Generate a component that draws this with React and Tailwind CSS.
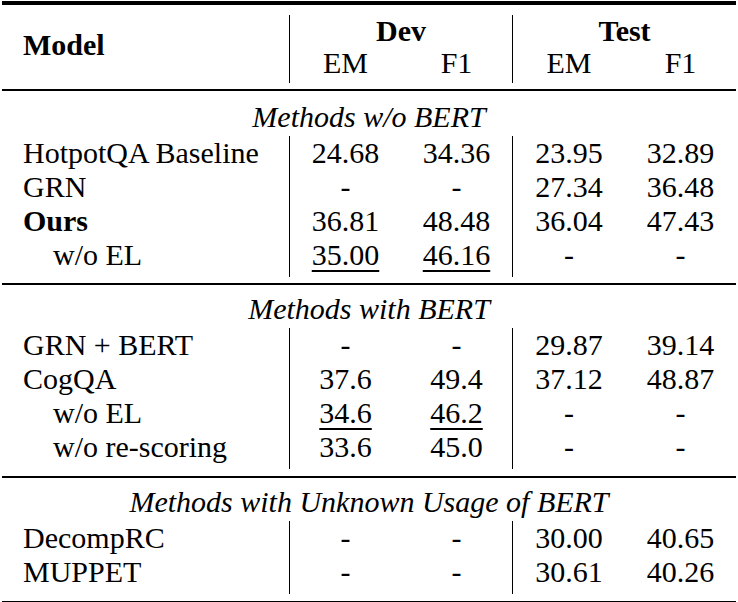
const sections = [
  {
    title: "Methods w/o BERT",
    pt: "pt-[9px]",
    pb: "pb-[6px]",
    rows: [
      { name: "HotpotQA Baseline", vals: ["24.68", "34.36", "23.95", "32.89"] },
      { name: "GRN", vals: ["-", "-", "27.34", "36.48"] },
      { name: "Ours", bold: true, vals: ["36.81", "48.48", "36.04", "47.43"] },
      { name: "w/o EL", indent: true, vals: ["35.00", "46.16", "-", "-"], ul: [true, true, false, false] },
    ],
  },
  {
    title: "Methods with BERT",
    pt: "pt-[7px]",
    pb: "pb-[7px]",
    rows: [
      { name: "GRN + BERT", vals: ["-", "-", "29.87", "39.14"] },
      { name: "CogQA", vals: ["37.6", "49.4", "37.12", "48.87"] },
      { name: "w/o EL", indent: true, vals: ["34.6", "46.2", "-", "-"], ul: [true, true, false, false] },
      { name: "w/o re-scoring", indent: true, vals: ["33.6", "45.0", "-", "-"] },
    ],
  },
  {
    title: "Methods with Unknown Usage of BERT",
    pt: "pt-[7px]",
    pb: "pb-[7px]",
    rows: [
      { name: "DecompRC", vals: ["-", "-", "30.00", "40.65"] },
      { name: "MUPPET", vals: ["-", "-", "30.61", "40.26"] },
    ],
  },
];

function Cell({ value, underline, width }) {
  return (
    <div className={`${width} text-center`}>
      <span className={underline ? "underline decoration-[1.5px] underline-offset-[5px]" : ""}>{value}</span>
    </div>
  );
}

function Row({ row }) {
  const ul = row.ul || [false, false, false, false];
  return (
    <div className="flex h-[34px] leading-[34px]">
      <div className={`w-[287px] ${row.indent ? "pl-[51px]" : "pl-[21px]"} ${row.bold ? "font-bold" : ""}`}>
        {row.name}
      </div>
      <div className="flex w-[223px] border-l border-black">
        <Cell value={row.vals[0]} underline={ul[0]} width="w-[111px]" />
        <Cell value={row.vals[1]} underline={ul[1]} width="w-[111px]" />
      </div>
      <div className="flex w-[224px] border-l border-black">
        <Cell value={row.vals[2]} underline={ul[2]} width="w-[112px]" />
        <Cell value={row.vals[3]} underline={ul[3]} width="w-[111px]" />
      </div>
    </div>
  );
}

function Section({ section }) {
  return (
    <div className={`${section.pt} ${section.pb}`}>
      <div className="h-[34px] leading-[34px] text-center italic">{section.title}</div>
      <div className="h-[2px]" />
      {section.rows.map((row, i) => (
        <Row key={i} row={row} />
      ))}
      {/* vertical rules run a little past the last row */}
      <div className="flex h-[5px]">
        <div className="w-[287px]" />
        <div className="w-[223px] border-l border-black" />
        <div className="w-[224px] border-l border-black" />
      </div>
    </div>
  );
}

export default function App() {
  return (
    <div className="w-[738px] h-[602px] bg-white text-black font-['Liberation_Serif',serif] text-[30px]">
      <div className="ml-[2px] w-[734px] pt-[1px]">
        <div className="h-[4px] bg-black" />

        <div className="flex pt-[10px] pb-[6px]">
          <div className="w-[287px] pt-[14px] pl-[21px] leading-[32px] font-bold">Model</div>
          <div className="w-[223px] border-l border-black pb-[4px] leading-[32px]">
            <div className="h-[32px] text-center font-bold">Dev</div>
            <div className="flex h-[32px]">
              <div className="w-[111px] text-center">EM</div>
              <div className="w-[111px] text-center">F1</div>
            </div>
          </div>
          <div className="w-[224px] border-l border-black pb-[4px] leading-[32px]">
            <div className="h-[32px] text-center font-bold">Test</div>
            <div className="flex h-[32px]">
              <div className="w-[112px] text-center">EM</div>
              <div className="w-[111px] text-center">F1</div>
            </div>
          </div>
        </div>

        {sections.map((section, i) => (
          <div key={i}>
            <div className="h-[2px] bg-black" />
            <Section section={section} />
          </div>
        ))}

        <div className="h-[4px] bg-black" />
      </div>
    </div>
  );
}
